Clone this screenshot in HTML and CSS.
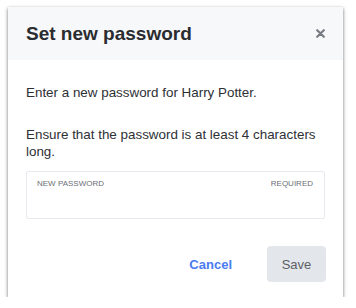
FILE: index.html
```html
<!DOCTYPE html>
<html>
<head>
<meta charset="utf-8">
<link rel="stylesheet" href="styles.css">
</head>
<body>
<div class="dialog">
  <div class="header">
    <h1 class="title">Set new password</h1>
    <svg class="close" width="9" height="9" viewBox="0 0 9 9"><path d="M1.2 1.2L7.8 7.8M7.8 1.2L1.2 7.8" stroke="#777b82" stroke-width="2.2" stroke-linecap="round"/></svg>
  </div>
  <div class="body">
    <p class="text">Enter a new password for Harry Potter.</p>
    <p class="text">Ensure that the password is at least 4 characters long.</p>
    <div class="field">
      <span class="label">NEW PASSWORD</span>
      <span class="label">REQUIRED</span>
    </div>
  </div>
  <div class="footer">
    <button class="btn cancel">Cancel</button>
    <button class="btn save">Save</button>
  </div>
</div>
</body>
</html>
```
FILE: styles.css
```css
* { box-sizing: border-box; }
html, body { margin: 0; padding: 0; background: #fff; }
body {
  padding: 7px 13px 0 8px;
  font-family: "Liberation Sans", Arial, sans-serif;
  color: #2b2e33;
}
.dialog {
  width: 335px;
  height: 290px;
  background: #fff;
  box-shadow: 0 1px 3px rgba(0,0,0,0.35), 0 2px 4px rgba(0,0,0,0.25);
  display: flex;
  flex-direction: column;
}
.header {
  height: 53px;
  background: #f7f8fa;
  display: flex;
  align-items: center;
  justify-content: space-between;
  padding: 0 18px 0 18px;
}
.title {
  margin: 0;
  font-size: 19px;
  font-weight: bold;
  color: #2a2c30;
  letter-spacing: 0;
}
.close { display: block; }
.body {
  padding: 24px 18px 0 18px;
}
.text {
  margin: 0;
  font-size: 13.4px;
  line-height: 17px;
  color: #2d3035;
}
.text + .text { margin-top: 25px; }
.field {
  margin-top: 11px;
  height: 48px;
  border: 1px solid #e7e9ee;
  border-radius: 2px;
  display: flex;
  justify-content: space-between;
  align-items: flex-start;
  padding: 7px 11px 0 10px;
}
.label {
  font-size: 8px;
  color: #6b6f76;
}
.footer {
  margin-top: auto;
  display: flex;
  justify-content: flex-end;
  align-items: center;
  gap: 20px;
  padding: 0 17px 15px 0;
}
.btn {
  font-family: inherit;
  font-size: 13px;
  border: none;
  border-radius: 4px;
  height: 36px;
  cursor: pointer;
}
.cancel {
  background: none;
  color: #4a7cf1;
  font-weight: bold;
  padding: 0 15px;
}
.save {
  background: #e3e6eb;
  color: #5b5f66;
  width: 59px;
  padding: 0;
}
```
